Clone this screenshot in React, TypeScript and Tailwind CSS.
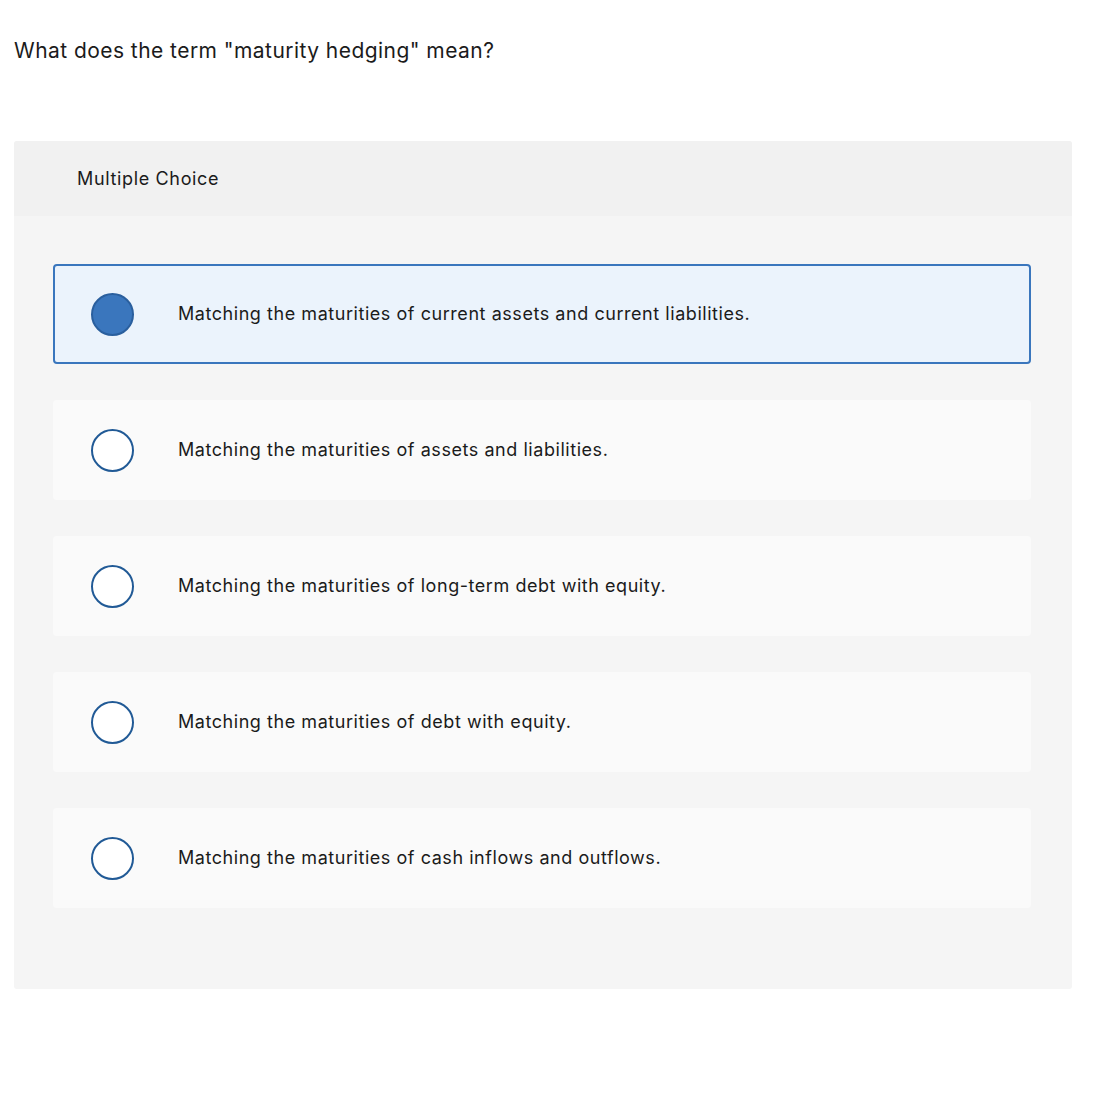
import React from 'react'

const OPTIONS = [
  'Matching the maturities of current assets and current liabilities.',
  'Matching the maturities of assets and liabilities.',
  'Matching the maturities of long-term debt with equity.',
  'Matching the maturities of debt with equity.',
  'Matching the maturities of cash inflows and outflows.'
]

export default function App() {
  const selected = 0

  return (
    <div className="min-h-[1110px] bg-white px-[14px] pt-[37px] text-[#1b1b1b]" style={{ fontFamily: 'Inter, "Open Sans", sans-serif' }}>
      <h1 className="text-[21px] leading-[28px] tracking-[0.45px]">What does the term "maturity hedging" mean?</h1>

      <div className="mt-[76px] w-[1058px] rounded-[3px] bg-[#f5f5f5]">
        {/* Header */}
        <div className="flex h-[75px] items-center rounded-t-[3px] bg-[#f1f1f1] pl-[63px] text-[18px] tracking-[0.65px]">
          Multiple Choice
        </div>

        {/* Options */}
        <div className="flex flex-col gap-[36px] pb-[81px] pl-[39px] pr-[41px] pt-[48px]">
          {OPTIONS.map((text, i) => (
            <div
              key={i}
              className={
                i === selected
                  ? 'flex h-[100px] items-center rounded-[4px] border-2 border-[#3a76bd] bg-[#ebf3fc] pl-[36px]'
                  : 'flex h-[100px] items-center rounded-[4px] border-2 border-transparent bg-[#fafafa] pl-[36px]'
              }
            >
              <span
                className={
                  i === selected
                    ? 'h-[43px] w-[43px] shrink-0 rounded-full border-2 border-[#2a5f9e] bg-[#3a76bd]'
                    : 'h-[43px] w-[43px] shrink-0 rounded-full border-2 border-[#215a96] bg-white'
                }
              />
              <span className="ml-[44px] pb-[2px] text-[18px] tracking-[0.55px]">{text}</span>
            </div>
          ))}
        </div>
      </div>
    </div>
  )
}
